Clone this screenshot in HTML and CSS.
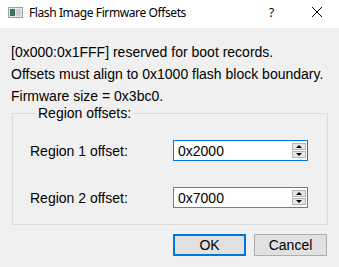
FILE: index.html
```html
<!DOCTYPE html>
<html lang="en">
<head>
  <meta charset="UTF-8">
  <title>Flash Image Firmware Offsets</title>
  <link rel="stylesheet" href="styles.css">
</head>
<body>

  <div class="titlebar">
    <svg class="title-icon" width="15" height="11" viewBox="0 0 15 11">
      <rect x="0.5" y="0.5" width="14" height="10" fill="#e8e8e8" stroke="#a0a0a0"/>
      <rect x="2" y="2" width="5" height="7" fill="#3f6f6a"/>
      <rect x="8" y="2" width="5" height="7" fill="#c9cfd1"/>
    </svg>
    <span class="title">Flash Image Firmware Offsets</span>
    <span class="title-btn">?</span>
    <span class="title-btn">
      <svg width="10" height="10" viewBox="0 0 10 10">
        <path d="M0 0 L10 10 M10 0 L0 10" stroke="#000" stroke-width="1"/>
      </svg>
    </span>
  </div>

  <div class="message">
    <div>[0x000:0x1FFF] reserved for boot records.</div>
    <div>Offsets must align to 0x1000 flash block boundary.</div>
    <div>Firmware size = 0x3bc0.</div>
  </div>

  <fieldset class="group">
    <legend>Region offsets:</legend>

    <div class="field">
      <label>Region 1 offset:</label>
      <div class="spin focus">
        <span class="spin-value">0x2000</span>
        <span class="spin-buttons">
          <span class="spin-btn"><i class="arrow-up"></i></span>
          <span class="spin-btn"><i class="arrow-down"></i></span>
        </span>
      </div>
    </div>

    <div class="field">
      <label>Region 2 offset:</label>
      <div class="spin">
        <span class="spin-value">0x7000</span>
        <span class="spin-buttons">
          <span class="spin-btn"><i class="arrow-up"></i></span>
          <span class="spin-btn"><i class="arrow-down"></i></span>
        </span>
      </div>
    </div>
  </fieldset>

  <div class="actions">
    <button class="btn default">OK</button>
    <button class="btn">Cancel</button>
  </div>

</body>
</html>
```

FILE: styles.css
```css
body {
  margin: 0;
  width: 339px;
  height: 267px;
  overflow: hidden;
  background: #f0f0f0;
  font-family: "Liberation Sans", Arial, sans-serif;
  font-size: 14px;
  color: #000;
}

.titlebar {
  height: 24px;
  padding: 0 0 4px 8px;
  background: #fff;
  display: flex;
  align-items: center;
  font-family: "Noto Sans", sans-serif;
  font-size: 12px;
}

.title-icon {
  margin-right: 6px;
}

.title {
  flex: 1;
  letter-spacing: -0.4px;
}

.title-btn {
  width: 45px;
  display: flex;
  justify-content: center;
  align-items: center;
}

.message {
  padding: 13px 10px 0 11px;
  line-height: 22px;
}

.group {
  margin: 0 11px 0 12px;
  padding: 20px 0 16px 17px;
  border: 1px solid #dcdcdc;
}

.group legend {
  margin-left: 6px;
  padding: 0 2px;
  line-height: 13px;
}

.field {
  display: flex;
  align-items: center;
  height: 21px;
}

.field + .field {
  margin-top: 26px;
}

.field label {
  width: 143px;
}

.spin {
  width: 135px;
  height: 21px;
  box-sizing: border-box;
  border: 1px solid #7a7a7a;
  background: #fff;
  display: flex;
  align-items: center;
}

.spin.focus {
  border-color: #0078d7;
}

.spin-value {
  flex: 1;
  padding-left: 4px;
}

.spin-buttons {
  display: flex;
  flex-direction: column;
  gap: 1px;
  margin-right: 1px;
}

.spin-btn {
  width: 12px;
  height: 5px;
  border: 1px solid #b5b5b5;
  background: #e6e6e6;
  display: flex;
  justify-content: center;
  align-items: center;
}

.arrow-up,
.arrow-down {
  width: 0;
  height: 0;
  border-left: 3px solid transparent;
  border-right: 3px solid transparent;
}

.arrow-up {
  border-bottom: 3px solid #000;
}

.arrow-down {
  border-top: 3px solid #000;
}

.actions {
  display: flex;
  justify-content: flex-end;
  gap: 8px;
  padding: 9px 12px 0 0;
}

.btn {
  width: 73px;
  height: 22px;
  box-sizing: border-box;
  background: #e1e1e1;
  border: 1px solid #adadad;
  font-family: "Liberation Sans", Arial, sans-serif;
  font-size: 14px;
  color: #000;
  padding: 0;
}

.btn.default {
  border: 2px solid #0078d7;
}
```
